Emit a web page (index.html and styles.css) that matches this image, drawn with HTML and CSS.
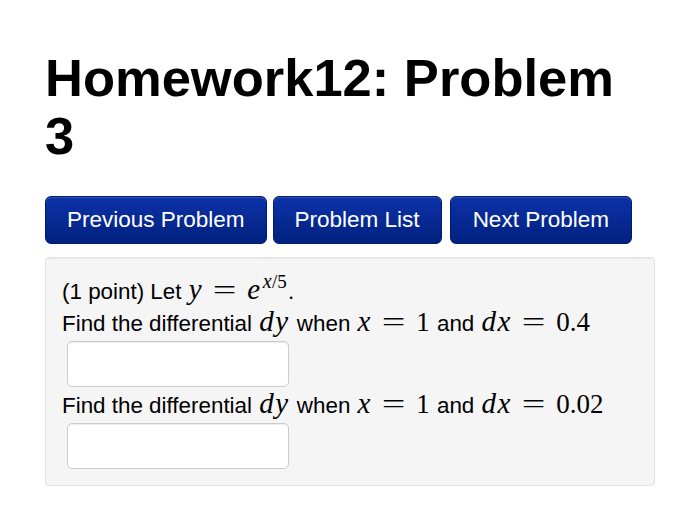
FILE: index.html
```html
<!DOCTYPE html>
<html>
<head>
<meta charset="utf-8">
<link rel="stylesheet" href="styles.css">
</head>
<body>
<div class="page">
  <h1 class="title">Homework12: Problem 3</h1>
  <div class="nav">
    <a class="btn btn-prev">Previous Problem</a>
    <a class="btn btn-list">Problem List</a>
    <a class="btn btn-next">Next Problem</a>
  </div>
  <div class="panel">
    <div class="line">(1 point) Let <span class="math"><i>y</i><span class="op">=</span><i>e</i><sup><i>x</i>/5</sup></span>.</div>
    <div class="line">Find the differential <span class="math"><i>dy</i></span> when <span class="math"><i>x</i><span class="op">=</span>1</span> and <span class="math"><i>dx</i><span class="op">=</span>0.4</span></div>
    <div class="answer"><input class="field" type="text"></div>
    <div class="line">Find the differential <span class="math"><i>dy</i></span> when <span class="math"><i>x</i><span class="op">=</span>1</span> and <span class="math"><i>dx</i><span class="op">=</span>0.02</span></div>
    <div class="answer"><input class="field" type="text"></div>
  </div>
</div>
</body>
</html>
```
FILE: styles.css
```css
html, body {
  margin: 0;
  padding: 0;
  background: #ffffff;
}
.page {
  padding: 0 45px 0 45px;
  font-family: "Liberation Sans", Arial, sans-serif;
  color: #000;
}
.title {
  margin: 49px 0 0 0;
  font-size: 52.5px;
  line-height: 58px;
  font-weight: bold;
  width: 600px;
}
.nav {
  display: flex;
  gap: 6px;
  margin-top: 31px;
}
.btn {
  display: block;
  height: 48px;
  box-sizing: border-box;
  padding: 0 21px;
  font-size: 22.5px;
  line-height: 46px;
  color: #fff;
  background: linear-gradient(#0d32a8, #00217f);
  border: 1px solid #001a6e;
  border-radius: 6px;
  box-shadow: inset 0 1px 0 rgba(255,255,255,0.15);
}
.btn-next { margin-left: 2px; padding: 0 22px; }
.panel {
  margin-top: 13px;
  width: 610px;
  box-sizing: border-box;
  background: #f5f5f5;
  border: 1px solid #e3e3e3;
  border-radius: 4px;
  padding: 18px 16px 13px 16px;
  box-shadow: inset 0 1px 1px rgba(0,0,0,0.05);
}
.line {
  font-size: 22.4px;
  line-height: 32px;
  height: 32px;
  white-space: nowrap;
}
.math {
  font-family: "Liberation Serif", "Times New Roman", serif;
  font-size: 27px;
  line-height: 0;
  margin: 0 1px;
}
.math i {
  font-style: italic;
  font-size: 29px;
  letter-spacing: 1.5px;
}
.math sup {
  font-size: 19px;
  vertical-align: 11px;
  line-height: 0;
  margin-left: 1px;
}
.math sup i { font-size: 20px; letter-spacing: 0.5px; }
.op {
  display: inline-block;
  line-height: 0;
  transform: scaleX(1.55);
  margin: 0 15px 0 14px;
}
.answer {
  padding: 1px 0 3px 5px;
}
.field {
  display: block;
  width: 222px;
  height: 46px;
  box-sizing: border-box;
  background: #fff;
  border: 1px solid #cccccc;
  border-radius: 5px;
  margin: 0;
  box-shadow: inset 0 1px 1px rgba(0,0,0,0.075);
}
```
